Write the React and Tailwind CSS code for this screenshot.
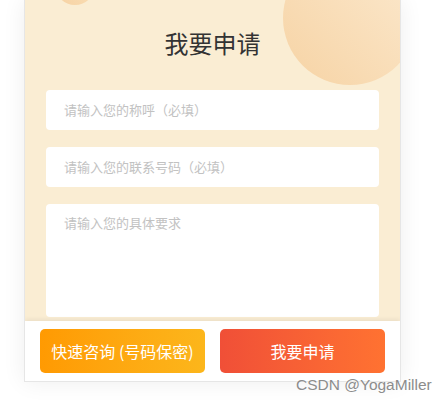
import React from 'react';

const fields = ['请输入您的称呼（必填）', '请输入您的联系号码（必填）'];

export default function App() {
  return (
    <div className="relative w-[446px] h-[403px] bg-white overflow-hidden font-['Noto_Sans_CJK_SC','Noto_Sans',sans-serif]">
      {/* Panel */}
      <div className="relative ml-[24px] w-[377px] h-[382px] border border-t-0 border-[#e6e6e6] shadow-[0_0_22px_rgba(0,0,0,0.07)] flex flex-col overflow-hidden">
        <div className="relative flex-1 bg-[#faedd3] px-[21px]">
          {/* decorative circles */}
          <div className="absolute left-[30px] top-[-35px] w-[40px] h-[40px] rounded-full bg-gradient-to-bl from-[#fbe3bd] to-[#f6d2a3]" />
          <div className="absolute left-[258px] top-[-49px] w-[134px] h-[134px] rounded-full bg-gradient-to-bl from-[#fcead0] to-[#f6d3a4]" />

          <h1 className="relative pt-[26px] h-[90px] text-center text-[24px] leading-[34px] text-[#333333]">我要申请</h1>

          <div className="relative flex flex-col gap-[17px]">
            {fields.map((f) => (
              <div key={f} className="h-[40px] rounded-[4px] bg-white flex items-center px-[18px] text-[13px] text-[#c2c2c2]">
                {f}
              </div>
            ))}
            <div className="h-[113px] rounded-[4px] bg-white px-[18px] pt-[10px] text-[13px] leading-[18px] text-[#c2c2c2]">
              请输入您的具体要求
            </div>
          </div>
        </div>

        {/* bottom bar */}
        <div className="relative h-[60px] bg-white shadow-[0_-2px_4px_rgba(0,0,0,0.06)] flex items-center px-[15px] gap-[15px]">
          <button className="w-[165px] h-[44px] rounded-[5px] bg-gradient-to-r from-[#ff9a02] to-[#fcb61b] text-white text-[16px]">
            快速咨询 (号码保密)
          </button>
          <button className="w-[165px] h-[44px] rounded-[5px] bg-gradient-to-r from-[#f04f37] to-[#ff7231] text-white text-[16px]">
            我要申请
          </button>
        </div>
      </div>

      {/* watermark */}
      <div className="absolute left-[296px] top-[374px] text-[15.5px] leading-[22px] text-[#8c8c8c] font-['Liberation_Sans',sans-serif] [text-shadow:0_0_2px_#fff]">
        CSDN @YogaMiller
      </div>
    </div>
  );
}
